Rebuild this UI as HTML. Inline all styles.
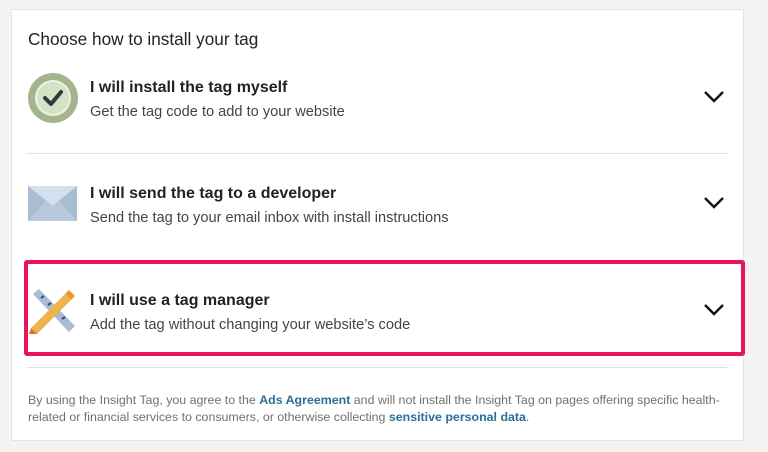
<!DOCTYPE html>
<html><head><style>
body{margin:0;width:768px;height:452px;background:#f3f3f2;font-family:"Liberation Sans",sans-serif;position:relative;overflow:hidden}
.card{position:absolute;left:11px;top:9px;width:733px;height:432px;background:#fff;border:1px solid #e3e3e3;box-sizing:border-box}
.a{position:absolute;white-space:nowrap}
.t{font-size:16px;font-weight:bold;color:#222}
.s{font-size:14.6px;color:#444}
.hr{position:absolute;left:27px;width:700px;height:1px;background:#e0e0e0}
.chev{position:absolute;left:704px;width:20px;height:12px}
.f{font-size:12.4px;color:#707070;line-height:17px}
.f b{color:#2a6f97}
</style></head><body>
<div class="card"></div>
<div class="a" style="left:28px;top:29px;font-size:17.2px;color:#222">Choose how to install your tag</div>

<svg class="a" style="left:27px;top:72px" width="52" height="52" viewBox="0 0 52 52"><circle cx="26" cy="26" r="25" fill="#a3b58c"/><circle cx="26" cy="26" r="18" fill="#eef2e6"/><circle cx="26" cy="26" r="16" fill="#d6e2c6"/><path d="M18 26l6 6 10-12" stroke="#2d3a3a" stroke-width="4" fill="none" stroke-linecap="round" stroke-linejoin="round"/></svg>
<div class="a t" style="left:90px;top:79px">I will install the tag myself</div>
<div class="a s" style="left:90px;top:104px">Get the tag code to add to your website</div>
<svg class="chev" style="top:91px" viewBox="0 0 20 12"><path d="M1 1l9 9 9-9" stroke="#111" stroke-width="2.4" fill="none"/></svg>
<div class="hr" style="top:153px"></div>

<svg class="a" style="left:28px;top:186px" width="49" height="35" viewBox="0 0 49 35"><rect width="49" height="35" fill="#a9bdd2"/><path d="M0 0L24.5 20 49 0z" fill="#d3e1ee"/><path d="M0 35L18 15 24.5 20 31 15 49 35z" fill="#b7c9db"/></svg>
<div class="a t" style="left:90px;top:185px">I will send the tag to a developer</div>
<div class="a s" style="left:90px;top:210px">Send the tag to your email inbox with install instructions</div>
<svg class="chev" style="top:197px" viewBox="0 0 20 12"><path d="M1 1l9 9 9-9" stroke="#111" stroke-width="2.4" fill="none"/></svg>

<div class="a" style="left:24px;top:260px;width:721px;height:96px;border:4px solid #e8155e;border-radius:3px;box-sizing:border-box"></div>
<svg class="a" style="left:29px;top:288px" width="48" height="46" viewBox="0 0 48 46"><path d="M4 6L10 1 46 38 40 44z" fill="#a9bdd2"/><g stroke="#3a4a6a" stroke-width="2"><path d="M12 10l3-2M19 17l3-2M26 24l3-2M33 31l3-2"/></g><path d="M2 40L36 6 42 12 8 46z" fill="#f0b24a"/><path d="M36 6L40 2 46 8 42 12z" fill="#e89a2a"/><path d="M2 40L8 46 0 46z" fill="#c7783a"/></svg>
<div class="a t" style="left:90px;top:292px">I will use a tag manager</div>
<div class="a s" style="left:90px;top:317px">Add the tag without changing your website’s code</div>
<svg class="chev" style="top:304px" viewBox="0 0 20 12"><path d="M1 1l9 9 9-9" stroke="#111" stroke-width="2.4" fill="none"/></svg>
<div class="hr" style="top:367px"></div>

<div class="a f" style="left:28px;top:392px">By using the Insight Tag, you agree to the <b>Ads Agreement</b> and will not install the Insight Tag on pages offering specific health-<br>related or financial services to consumers, or otherwise collecting <b>sensitive personal data</b>.</div>
</body></html>
